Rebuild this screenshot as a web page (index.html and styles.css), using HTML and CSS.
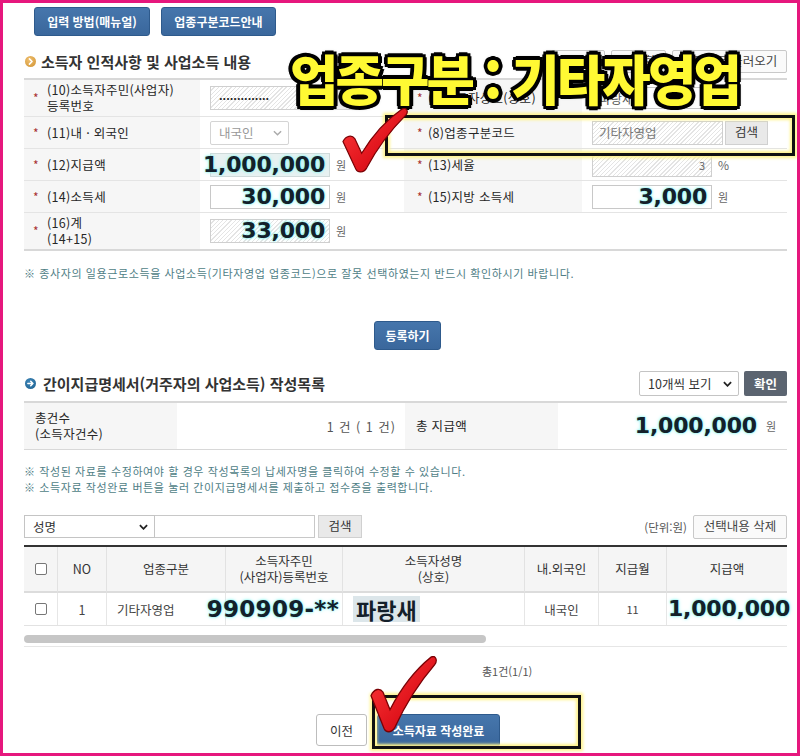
FILE: index.html
```html
<!DOCTYPE html>
<html lang="ko">
<head>
<meta charset="utf-8">
<link rel="stylesheet" href="styles.css">
</head>
<body>
<div class="frame">
  <div class="page">
    <div class="top-btns">
      <button class="btn-blue b1">입력 방법(매뉴얼)</button>
      <button class="btn-blue b2">업종구분코드안내</button>
    </div>

    <div class="sec-head sh1">
      <h2 class="sec-title"><span class="ico gold"><svg viewBox="0 0 10 10"><path d="M4 2.6 L6.4 5 L4 7.4"/></svg></span>소득자 인적사항 및 사업소득 내용</h2>
      <div class="tools">
        <button class="btn-light t1">조회</button>
        <button class="btn-light t2">초기화</button>
        <button class="btn-light t3">소득자료 불러오기</button>
      </div>
    </div>

    <div class="form-grid">
      <div class="lab"><span class="star">*</span><span class="lt">(10)소득자주민(사업자)<br>등록번호</span></div>
      <div class="val"><span class="inp hatch w100 dots">··············</span><span class="mini-btn"></span></div>
      <div class="lab r"><span class="star">*</span><span class="lt">(9)소득자상호(상호)</span></div>
      <div class="val"><span class="inp w140 txt">파랑새</span></div>

      <div class="lab"><span class="star">*</span><span class="lt">(11)내 · 외국인</span></div>
      <div class="val"><span class="sel w79 dis"><span>내국인</span><svg class="chev" viewBox="0 0 10 6"><path d="M1 1 L5 5 L9 1"/></svg></span></div>
      <div class="lab r"><span class="star">*</span><span class="lt">(8)업종구분코드</span></div>
      <div class="val"><span class="inp hatch w131 txt gray">기타자영업</span><button class="btn-gray srch">검색</button></div>

      <div class="lab"><span class="star">*</span><span class="lt">(12)지급액</span></div>
      <div class="val"><span class="inp w120 num tint"><span class="big">1,000,000</span></span><span class="unit">원</span></div>
      <div class="lab r"><span class="star">*</span><span class="lt">(13)세율</span></div>
      <div class="val"><span class="inp hatch w120 num small">3</span><span class="unit pct">%</span></div>

      <div class="lab"><span class="star">*</span><span class="lt">(14)소득세</span></div>
      <div class="val"><span class="inp w120 num"><span class="big">30,000</span></span><span class="unit">원</span></div>
      <div class="lab r"><span class="star">*</span><span class="lt">(15)지방 소득세</span></div>
      <div class="val"><span class="inp w120 num"><span class="big">3,000</span></span><span class="unit">원</span></div>

      <div class="lab last"><span class="star">*</span><span class="lt">(16)계<br>(14+15)</span></div>
      <div class="val last"><span class="inp hatch w120 num"><span class="big">33,000</span></span><span class="unit">원</span></div>
      <div class="val last blank"></div>
      <div class="val last"></div>
    </div>

    <p class="note n1">※ 종사자의 일용근로소득을 사업소득(기타자영업 업종코드)으로 잘못 선택하였는지 반드시 확인하시기 바랍니다.</p>

    <div class="reg-row"><button class="btn-blue reg">등록하기</button></div>

    <div class="sec-head sh2">
      <h2 class="sec-title"><span class="ico blue"><svg viewBox="0 0 10 10"><path d="M2.6 5 H7.2 M5.2 3 L7.2 5 L5.2 7"/></svg></span>간이지급명세서(거주자의 사업소득) 작성목록</h2>
      <div class="tools">
        <span class="sel w100"><span>10개씩 보기</span><svg class="chev dark" viewBox="0 0 10 6"><path d="M1 1 L5 5 L9 1"/></svg></span>
        <button class="btn-dark">확인</button>
      </div>
    </div>

    <div class="sum-grid">
      <div class="slab">총건수<br>(소득자건수)</div>
      <div class="sval cnt">1 건 ( 1 건)</div>
      <div class="slab">총 지급액</div>
      <div class="sval amt"><span class="big">1,000,000</span><span class="unit">원</span></div>
    </div>

    <div class="notes">
      <p class="note">※ 작성된 자료를 수정하여야 할 경우 작성목록의 납세자명을 클릭하여 수정할 수 있습니다.</p>
      <p class="note">※ 소득자료 작성완료 버튼을 눌러 간이지급명세서를 제출하고 접수증을 출력합니다.</p>
    </div>

    <div class="search-row">
      <div class="search-left">
        <span class="sel w131 sq"><span>성명</span><svg class="chev dark" viewBox="0 0 10 6"><path d="M1 1 L5 5 L9 1"/></svg></span>
        <span class="inp w160 sq"></span>
        <button class="btn-gray s2">검색</button>
      </div>
      <div class="search-right">
        <span class="unit-note">(단위:원)</span>
        <button class="btn-light del">선택내용 삭제</button>
      </div>
    </div>

    <div class="list">
      <div class="th"><span class="cb"></span></div>
      <div class="th">NO</div>
      <div class="th">업종구분</div>
      <div class="th">소득자주민<br>(사업자)등록번호</div>
      <div class="th">소득자성명<br>(상호)</div>
      <div class="th">내.외국인</div>
      <div class="th">지급월</div>
      <div class="th end">지급액</div>

      <div class="td"><span class="cb"></span></div>
      <div class="td">1</div>
      <div class="td left gray">기타자영업</div>
      <div class="td right"><span class="big id">990909-**</span></div>
      <div class="td left name"><span class="hl">파랑새</span></div>
      <div class="td gray">내국인</div>
      <div class="td gray sm">11</div>
      <div class="td right end amt"><span class="big">1,000,000</span></div>
    </div>

    <div class="scroll"><div class="thumb"></div></div>
    <div class="paging">총1건(1/1)</div>

    <div class="bottom-btns">
      <button class="btn-white">이전</button>
      <button class="btn-blue done">소득자료 작성완료</button>
    </div>
  </div>

  <div class="hl-box box1"></div>
  <div class="hl-box box2"></div>
  <div class="overlay-title">업종구분 : 기타자영업</div>

  <svg class="check c1" viewBox="0 0 70 66" preserveAspectRatio="none">
    <defs><linearGradient id="rg" x1="0" y1="0" x2="1" y2="1"><stop offset="0" stop-color="#ff3b3b"/><stop offset="0.6" stop-color="#e0141c"/><stop offset="1" stop-color="#a8060c"/></linearGradient></defs>
    <path d="M3,34 C6,28 12,27 15,31 L22,46 C34,26 50,10 63,1 C67,-1 70,3 67,7 C52,22 37,42 27,61 C24,66 18,66 16,62 Z" fill="url(#rg)" stroke="#7a0004" stroke-width="1.2"/>
  </svg>
  <svg class="check c2" viewBox="0 0 70 66" preserveAspectRatio="none">
    <path d="M3,34 C6,28 12,27 15,31 L22,46 C34,26 50,10 63,1 C67,-1 70,3 67,7 C52,22 37,42 27,61 C24,66 18,66 16,62 Z" fill="url(#rg)" stroke="#7a0004" stroke-width="1.2"/>
  </svg>
</div>
</body>
</html>
```

FILE: styles.css
```css
* { box-sizing: border-box; margin: 0; padding: 0; }

body {
  margin: 0;
  background: #fff;
  font-family: "Noto Sans CJK KR", "Noto Sans", sans-serif;
  font-size: 12px;
  color: #333;
}

button { font-family: inherit; cursor: pointer; }

.frame {
  position: relative;
  width: 800px;
  height: 756px;
  border: 3px solid #e6177d;
  overflow: hidden;
  background: #fff;
}

.page { padding: 4px 10px 0 21px; }

/* buttons */
.btn-blue {
  height: 29px;
  border: 1px solid #2e5a8c;
  border-radius: 3px;
  background: linear-gradient(#4676ac, #3a679c);
  color: #fff;
  font-weight: bold;
  font-size: 12px;
  line-height: 1;
  display: inline-flex;
  align-items: center;
  justify-content: center;
}
.top-btns { display: flex; gap: 11px; margin-left: 10px; }
.b1 { width: 116px; }
.b2 { width: 115px; }

.btn-light {
  height: 23px;
  border: 1px solid #c9c9c9;
  background: #fafafa;
  color: #444;
  font-size: 12.5px;
  line-height: 1;
  border-radius: 2px;
}
.btn-gray {
  height: 24px;
  border: 1px solid #d0d0d0;
  background: #e9e9e9;
  color: #333;
  font-size: 12.5px;
  line-height: 1;
}
.btn-dark {
  width: 43px;
  height: 25px;
  border: none;
  border-radius: 2px;
  background: #5b6470;
  color: #fff;
  font-weight: bold;
  font-size: 12.5px;
}
.btn-white {
  width: 51px;
  height: 32px;
  border: 1px solid #bdbdbd;
  border-radius: 3px;
  background: #fff;
  color: #333;
  font-size: 12.5px;
}

/* section heads */
.sec-head {
  display: flex;
  justify-content: space-between;
  align-items: center;
  height: 28px;
}
.sh1 { margin-top: 11px; margin-bottom: 3px; }
.sec-title {
  display: flex;
  align-items: center;
  font-size: 15px;
  font-weight: bold;
  color: #333;
  line-height: 1;
}
.ico {
  width: 11px;
  height: 11px;
  border-radius: 50%;
  margin-left: 1px;
  margin-right: 5px;
  display: inline-flex;
  flex: none;
}
.ico svg { width: 11px; height: 11px; }
.ico path { fill: none; stroke: #fff; stroke-width: 1.4; stroke-linecap: round; stroke-linejoin: round; }
.ico.gold { background: radial-gradient(circle at 40% 35%, #f0c070, #cf9130); }
.ico.blue { background: radial-gradient(circle at 40% 35%, #3e86b8, #1c5f8e); margin-right: 7px; }

.tools { display: flex; align-items: center; gap: 6px; }
.t1 { width: 54px; }
.t2 { width: 55px; }
.t3 { width: 115px; }

/* form grid */
.form-grid {
  display: grid;
  grid-template-columns: 176px 204px 178px 205px;
  grid-template-rows: 37px 32px 32px 32px 36px;
  border-top: 2px solid #d8d8d8;
  border-bottom: 2px solid #d8d8d8;
}
.lab, .val { border-bottom: 1px solid #e4e4e4; display: flex; align-items: center; }
.lab.last, .val.last { border-bottom: none; }
.lab { background: #f6f6f6; padding-left: 9px; }
.lab.r { padding-left: 13px; }
.star { color: #a83232; width: 14px; line-height: 16px; font-size: 12px; flex: none; }
.lab.r .star { width: 11px; }
.lt { line-height: 16px; color: #262626; font-size: 12.5px; letter-spacing: 0.3px; white-space: nowrap; }

.val { padding-left: 10px; }

.inp {
  display: inline-flex;
  align-items: center;
  height: 24px;
  border: 1px solid #c8c8c8;
  background: #fff;
  font-size: 12.5px;
  color: #333;
  overflow: visible;
  white-space: nowrap;
}
.hatch {
  background: repeating-linear-gradient(135deg, #fff 0 2px, #e4e4e4 2px 3px);
  border-color: #cfcfcf;
}
.tint { background: #e7f1f1; border-color: #cfdada; }
.w100 { width: 100px; }
.w120 { width: 120px; }
.w131 { width: 131px; }
.w140 { width: 140px; height: 22px; }
.w160 { width: 160px; }
.dots { padding-left: 8px; font-weight: bold; color: #222; font-size: 11px; }
.txt { padding-left: 6px; color: #555; }
.gray { color: #777; }
.num { justify-content: flex-end; padding-right: 4px; }
.small { color: #666; font-size: 11px; padding-right: 6px; }
.mini-btn {
  width: 42px;
  height: 24px;
  margin-left: 5px;
  background: #ececec;
  border: 1px solid #d0d0d0;
}
.srch { width: 43px; margin-left: 2px; }
.unit { font-size: 11px; color: #666; margin-left: 6px; }
.unit.pct { font-size: 12px; }

.sel {
  display: inline-flex;
  align-items: center;
  justify-content: space-between;
  height: 24px;
  border: 1px solid #c4c4c4;
  border-radius: 2px;
  background: #fff;
  padding: 0 6px 0 8px;
  font-size: 12.5px;
  color: #333;
}
.sel.dis { color: #999; border-color: #d4d4d4; }
.w79 { width: 79px; }
.sel.w100 { width: 100px; height: 25px; }
.chev { width: 9px; height: 6px; flex: none; }
.chev path { fill: none; stroke: #aaa; stroke-width: 1.6; }
.chev.dark path { stroke: #222; stroke-width: 2; }

.big {
  font-family: "DejaVu Sans", sans-serif;
  font-weight: bold;
  font-size: 22px;
  line-height: 1;
  color: #14202a;
  text-shadow: 0 0 2px #5ff0ea, 0 0 4px #aef7f5;
  letter-spacing: -0.2px;
}

/* note */
.note {
  font-size: 11px;
  line-height: 16px;
  color: #4f7e86;
  letter-spacing: 0.6px;
  white-space: nowrap;
}
.n1 { margin-top: 14px; }

.reg-row { display: flex; justify-content: center; margin-top: 40px; padding-left: 4px; }
.reg { width: 67px; height: 29px; }

.sh2 { margin-top: 19px; height: 29px; margin-bottom: 3px; }
.sh2 .tools { gap: 5px; }

/* summary */
.sum-grid {
  display: grid;
  grid-template-columns: 153px 228px 153px 229px;
  height: 49px;
  border-top: 2px solid #d8d8d8;
  border-bottom: 1px solid #d8d8d8;
}
.slab {
  background: #f6f6f6;
  display: flex;
  align-items: center;
  padding-left: 11px;
  line-height: 16px;
  color: #262626;
  font-size: 12.5px;
  letter-spacing: 0.3px;
}
.sval { display: flex; align-items: center; justify-content: flex-end; }
.cnt { padding-right: 9px; color: #555; font-size: 12.5px; letter-spacing: 1px; }
.amt { padding-right: 11px; }
.amt .unit { margin-left: 9px; }

.notes { margin-top: 13px; }

/* search */
.search-row {
  display: flex;
  justify-content: space-between;
  align-items: center;
  margin-top: 20px;
  height: 23px;
}
.search-left { display: flex; align-items: center; }
.sq { border-radius: 0; height: 23px; }
.search-left .inp { border-left: none; }
.s2 { width: 44px; height: 23px; margin-left: 3px; }
.search-right { display: flex; align-items: center; gap: 6px; }
.unit-note { font-size: 11.5px; color: #555; }
.del { width: 94px; height: 24px; }

/* list */
.list {
  display: grid;
  grid-template-columns: 34px 49px 119px 117px 182px 74px 68px 120px;
  grid-template-rows: 46px 32px;
  margin-top: 7px;
  border-top: 2px solid #333;
  border-bottom: 1px solid #e2e2e2;
}
.th {
  background: #f5f5f5;
  border-right: 1px solid #e2e2e2;
  border-bottom: 2px solid #dcdcdc;
  display: flex;
  align-items: center;
  justify-content: center;
  text-align: center;
  line-height: 16px;
  font-size: 12.5px;
  color: #333;
}
.td {
  border-right: 1px solid #e6e6e6;
  display: flex;
  align-items: center;
  justify-content: center;
  font-size: 12.5px;
  color: #444;
  white-space: nowrap;
}
.th.end, .td.end { border-right: none; }
.td.left { justify-content: flex-start; padding-left: 10px; }
.td.right { justify-content: flex-end; padding-right: 3px; }
.td.sm { font-size: 11px; }
.td.amt { padding-right: 0; margin-right: -3px; }
.id { font-size: 23px; letter-spacing: 0.3px; }
.name { padding-left: 9px; }
.hl {
  background: #dce6ea;
  font-size: 22px;
  font-weight: bold;
  line-height: 26px;
  padding: 0 3px;
  color: #14202a;
}
.cb {
  width: 12px;
  height: 12px;
  border: 1px solid #777;
  border-radius: 2px;
  background: #fff;
}

.scroll {
  margin-top: 9px;
  height: 12px;
  border-bottom: 1px solid #e6e6e6;
}
.thumb {
  width: 462px;
  height: 8px;
  border-radius: 4px;
  background: #c6c6c6;
}

.paging {
  margin-top: 16px;
  margin-left: 458px;
  font-size: 11px;
  line-height: 16px;
  color: #555;
}

.bottom-btns {
  display: flex;
  gap: 10px;
  margin-top: 35px;
  margin-left: 292px;
  align-items: flex-start;
}
.done { width: 123px; height: 33px; }

/* overlays */
.hl-box {
  position: absolute;
  border: 3px solid #111;
  box-shadow: 0 0 3px 2px #fff38a, inset 0 0 3px 2px #fff38a;
}
.box1 { left: 382px; top: 112px; width: 410px; height: 41px; }
.box2 { left: 369px; top: 692px; width: 209px; height: 54px; }

.overlay-title {
  position: absolute;
  left: 287px;
  top: 48px;
  font-family: "Noto Sans CJK KR", sans-serif;
  font-weight: 900;
  font-size: 54px;
  line-height: 1;
  letter-spacing: -3px;
  white-space: nowrap;
  color: #fff933;
  -webkit-text-stroke: 2px #000;
  paint-order: stroke fill;
  text-shadow: 4px 0 #000, -4px 0 #000, 0 4px #000, 0 -4px #000,
    3px 3px #000, -3px 3px #000, 3px -3px #000, -3px -3px #000, 0 0 5px #000;
  transform: scaleX(0.975);
  transform-origin: left top;
}

.check { position: absolute; }
.c1 { left: 337px; top: 105px; width: 69px; height: 65px; }
.c2 { left: 365px; top: 653px; width: 70px; height: 77px; }
```
